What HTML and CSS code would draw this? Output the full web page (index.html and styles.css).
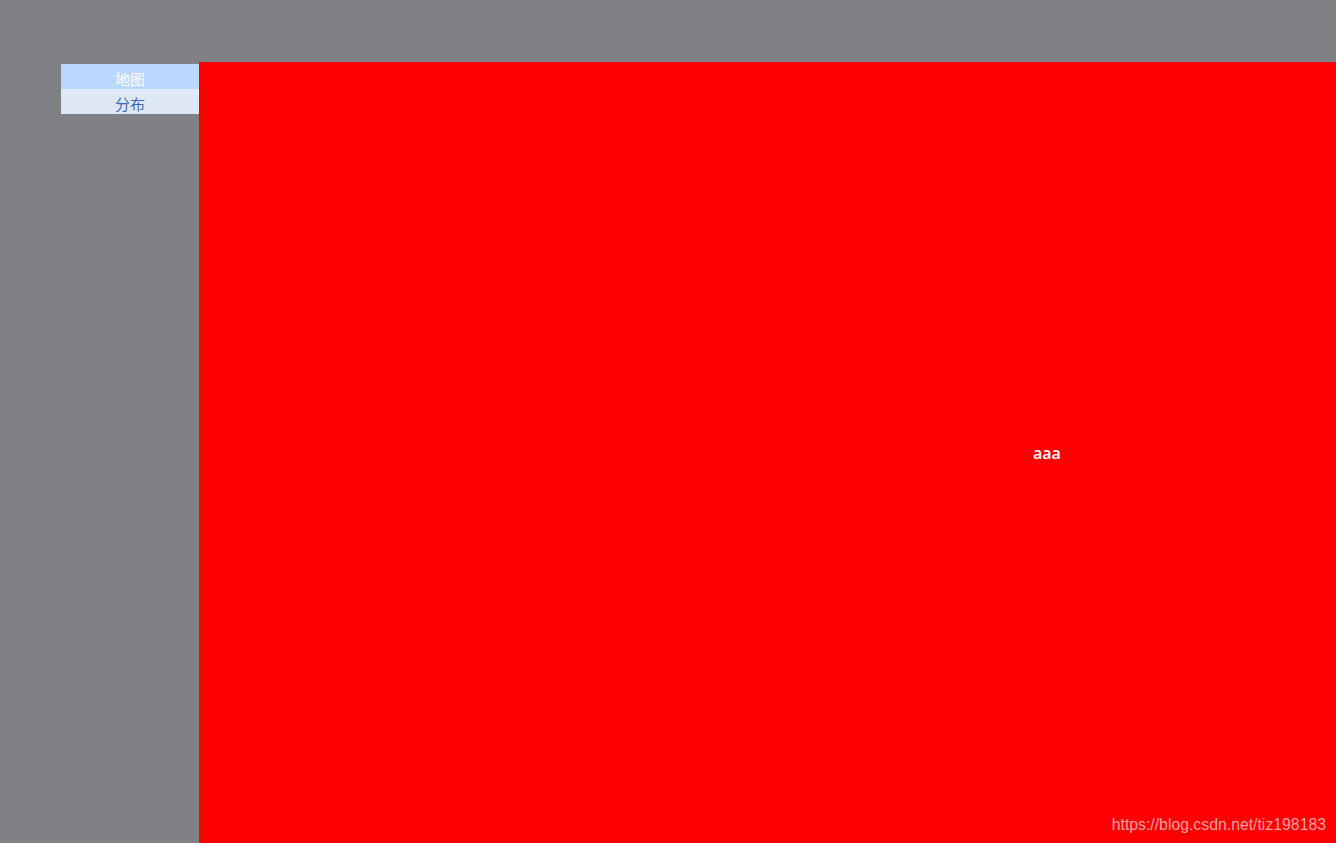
FILE: index.html
```html
<!DOCTYPE html>
<html lang="zh">
<head>
<meta charset="utf-8">
<title>地图</title>
<link rel="stylesheet" href="styles.css">
</head>
<body>
<div class="page">
  <nav class="sidebar">
    <div class="nav-item active">地图</div>
    <div class="nav-item">分布</div>
  </nav>
  <main class="content">
    <div class="label">aaa</div>
  </main>
</div>
<div class="watermark">https://blog.csdn.net/tiz198183</div>
</body>
</html>
```
FILE: styles.css
```css
html, body {
  margin: 0;
  padding: 0;
  height: 100%;
  overflow: hidden;
  background: #808184;
}
.page {
  display: flex;
  align-items: flex-start;
  height: 100%;
  padding-top: 62px;
  box-sizing: border-box;
}
.sidebar {
  margin-left: 61px;
  margin-top: 2px;
  width: 138px;
  display: flex;
  flex-direction: column;
}
.nav-item {
  height: 25px;
  line-height: 29px;
  text-align: center;
  font-family: "Noto Sans CJK SC", "Microsoft YaHei", sans-serif;
  font-size: 15px;
  color: #3d67b5;
  background: #dfe9f6;
}
.nav-item.active {
  color: #ffffff;
  background: #bad8fe;
}
.content {
  flex: 1;
  align-self: stretch;
  background: #ff0000;
  display: flex;
  align-items: center;
  padding-left: 834px;
}
.label {
  color: #ffffff;
  font-family: "Open Sans", "Noto Sans", sans-serif;
  font-size: 16px;
  font-weight: 600;
}
.watermark {
  position: absolute;
  right: 10px;
  bottom: 9px;
  font-family: "Liberation Sans", Arial, sans-serif;
  font-size: 15.8px;
  color: #ffa0a0;
}
```
